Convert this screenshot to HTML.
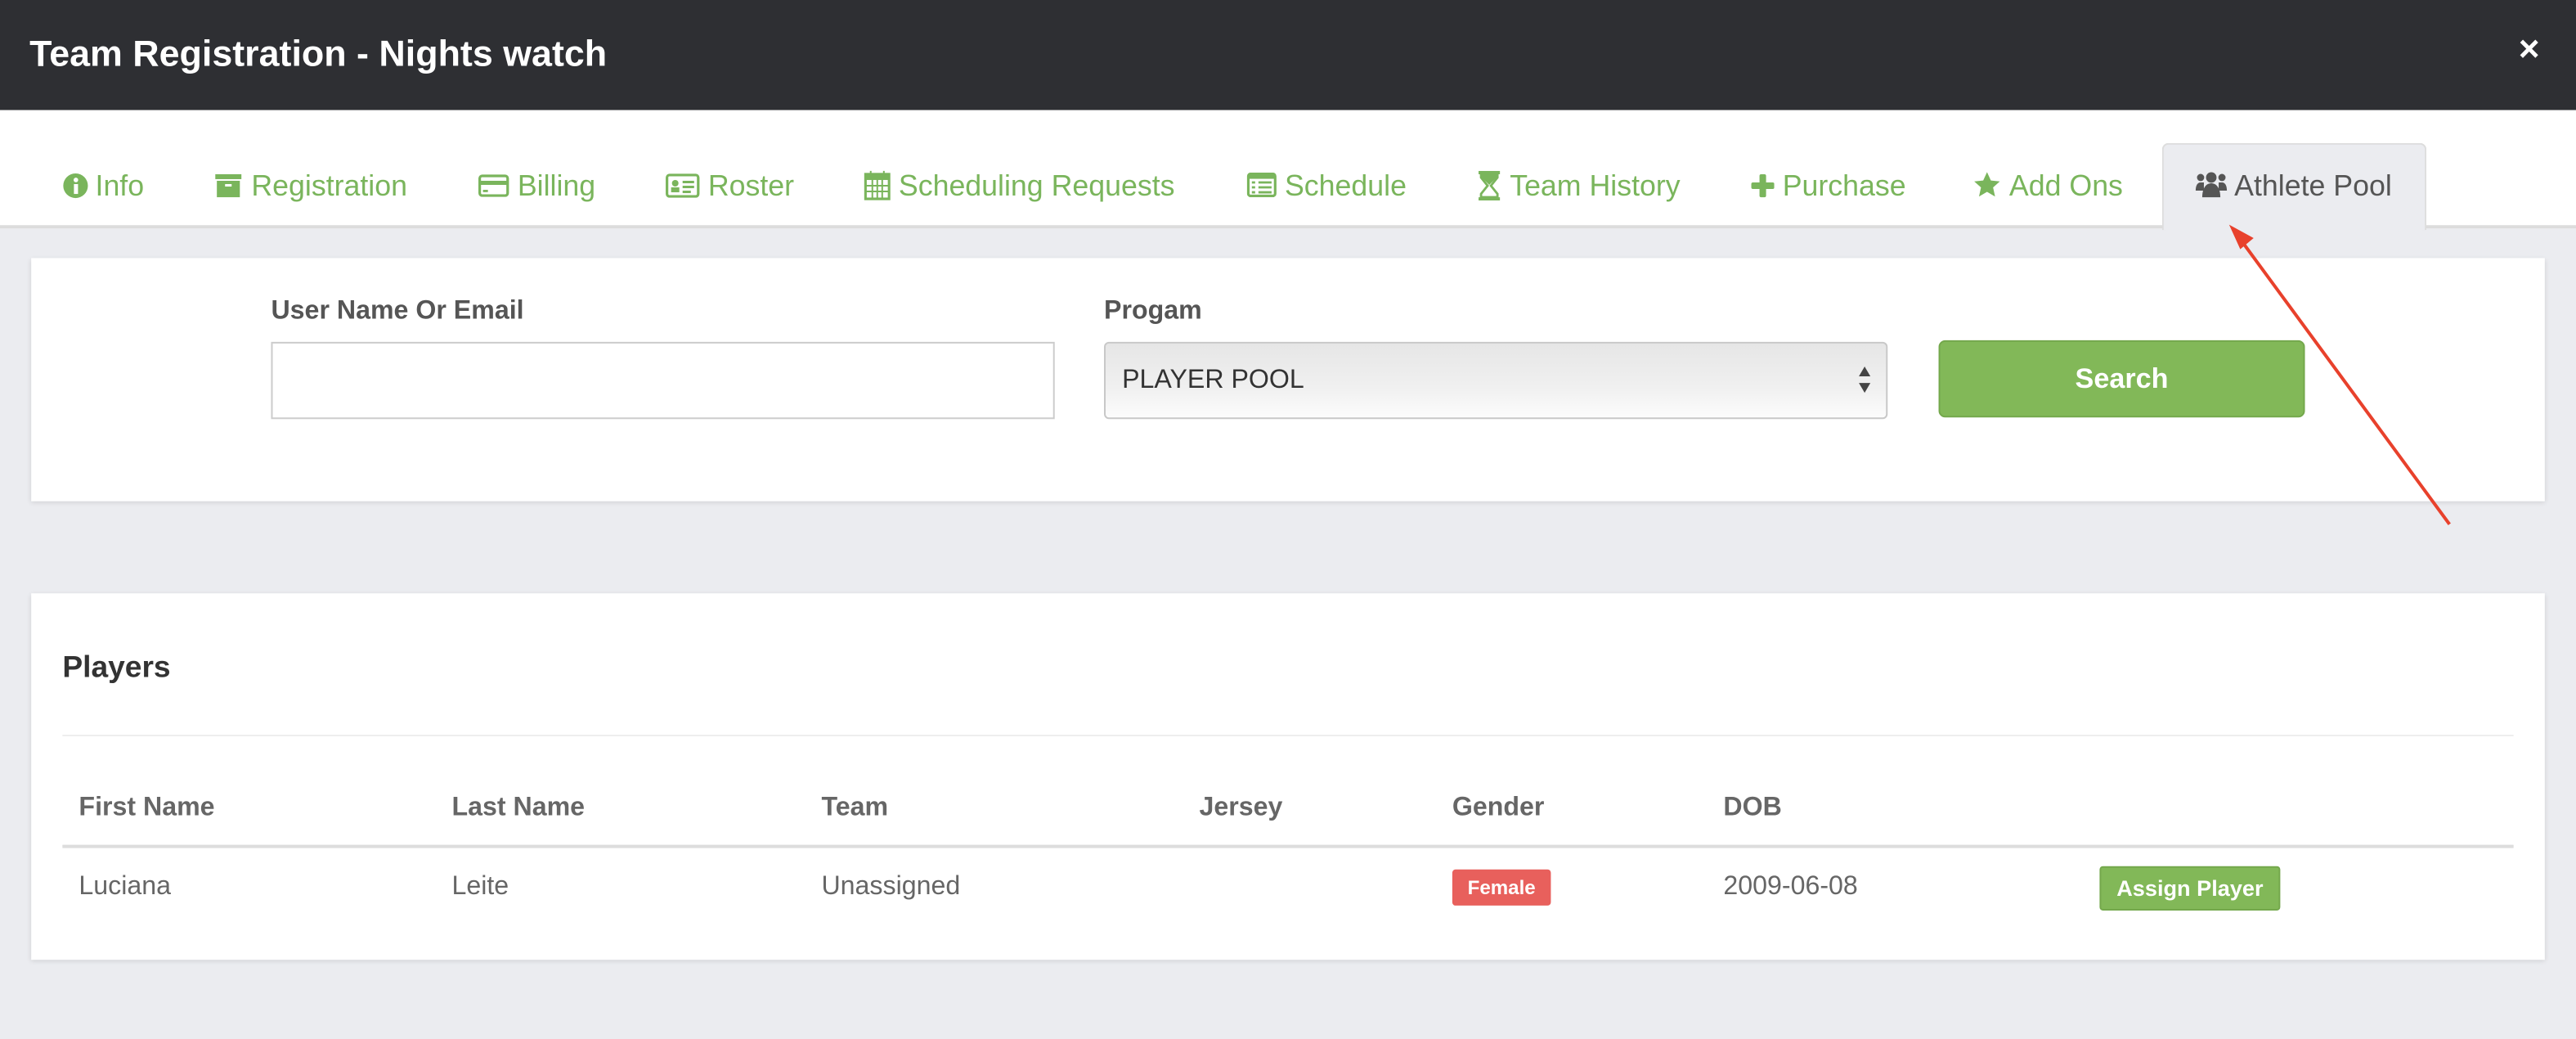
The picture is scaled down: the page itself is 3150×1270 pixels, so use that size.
<!DOCTYPE html>
<html><head><meta charset="utf-8"><style>
html,body{margin:0;padding:0;width:3150px;height:1270px;overflow:hidden;background:#ebecf0;font-family:"Liberation Sans",Arial,sans-serif}
#r{position:absolute;left:0;top:0;width:1568px;height:632px;transform:scale(2.00893);transform-origin:0 0;background:#ebecf0}
.a{position:absolute;white-space:nowrap}
.hdr{left:0;top:0;width:1568px;height:67px;background:#2e2f33}
.tabs{left:0;top:67px;width:1568px;height:70px;background:#fff;border-bottom:2px solid #dcdcdc}
.t{color:#7ab55c;font-size:17.8px;top:103px}
.ic{position:absolute;top:105px}
.card{background:#fff;box-shadow:0 1px 3px rgba(0,0,0,.12)}
.lbl{font-size:16px;font-weight:bold;color:#555}
.th{font-size:16px;font-weight:bold;color:#666;top:483px}
.td{font-size:16px;color:#666;top:531px}
</style></head><body><div id="r">
<div class="a hdr"></div>
<div class="a" style="left:18px;top:20px;color:#fff;font-size:22.3px;font-weight:bold">Team Registration - Nights watch</div>
<div class="a" style="left:1533px;top:17px;color:#fff;font-size:22px;font-weight:bold">×</div>
<div class="a tabs"></div>
<div class="a" style="left:1316px;top:87px;width:159px;height:52px;background:#ebecf0;border:1px solid #ddd;border-bottom:none;border-radius:4px 4px 0 0"></div>

<svg class="ic" style="left:38px" width="16" height="16" viewBox="0 0 16 16"><circle cx="8" cy="8" r="7.5" fill="#7ab55c"/><rect x="7" y="7" width="2.5" height="6" fill="#fff"/><circle cx="8.2" cy="4.5" r="1.4" fill="#fff"/></svg>
<div class="a t" style="left:58px">Info</div>
<svg class="ic" style="left:131px" width="16" height="16" viewBox="0 0 16 16"><rect x="0" y="1" width="16" height="3" fill="#7ab55c"/><rect x="1" y="5" width="14" height="10" fill="#7ab55c"/><rect x="6" y="7" width="4" height="1.5" fill="#fff"/></svg>
<div class="a t" style="left:153px">Registration</div>
<svg class="ic" style="left:291px" width="19" height="16" viewBox="0 0 19 16"><rect x="1" y="2" width="17" height="12" rx="1.5" fill="none" stroke="#7ab55c" stroke-width="1.6"/><rect x="1" y="5" width="17" height="2.5" fill="#7ab55c"/><rect x="3" y="10.5" width="3" height="1.4" fill="#7ab55c"/></svg>
<div class="a t" style="left:315px">Billing</div>
<svg class="ic" style="left:405px" width="21" height="16" viewBox="0 0 21 16"><rect x="1" y="1.5" width="19" height="13" rx="1.5" fill="none" stroke="#7ab55c" stroke-width="1.6"/><circle cx="6" cy="6.5" r="2" fill="#7ab55c"/><rect x="3.5" y="9" width="5" height="3" fill="#7ab55c"/><rect x="10.5" y="5" width="7" height="1.5" fill="#7ab55c"/><rect x="10.5" y="8" width="7" height="1.5" fill="#7ab55c"/><rect x="10.5" y="11" width="5" height="1.5" fill="#7ab55c"/></svg>
<div class="a t" style="left:431px">Roster</div>
<svg class="ic" style="left:526px;top:103px" width="16" height="19" viewBox="0 0 16 19"><rect x="0.8" y="3" width="14.4" height="15" fill="none" stroke="#7ab55c" stroke-width="1.6"/><rect x="0.8" y="3" width="14.4" height="3.5" fill="#7ab55c"/><path d="M4 1v4M12 1v4M1 10h14M1 13.5h14M5 6v12M8 6v12M11 6v12" stroke="#7ab55c" stroke-width="1"/></svg>
<div class="a t" style="left:547px">Scheduling Requests</div>
<svg class="ic" style="left:759px" width="18" height="15" viewBox="0 0 18 15"><rect x="0.8" y="0.8" width="16.4" height="13.4" rx="1.5" fill="none" stroke="#7ab55c" stroke-width="1.6"/><rect x="0.8" y="0.8" width="16.4" height="3" fill="#7ab55c"/><path d="M3 6h2M3 9h2M3 12h2M7 6h8M7 9h8M7 12h8" stroke="#7ab55c" stroke-width="1.4"/></svg>
<div class="a t" style="left:782px">Schedule</div>
<svg class="ic" style="left:899px;top:104px" width="15" height="18" viewBox="0 0 15 18"><path d="M1 1h13M1 17h13" stroke="#7ab55c" stroke-width="2"/><path d="M2.5 2h10v2L8.5 9l4 5v2h-10v-2l4-5-4-5z" fill="none" stroke="#7ab55c" stroke-width="1.4"/><path d="M3 2h9v2L7.5 8.5 3 4z" fill="#7ab55c"/></svg>
<div class="a t" style="left:919px">Team History</div>
<svg class="ic" style="left:1066px" width="14" height="16" viewBox="0 0 14 16"><rect x="5" y="1" width="4" height="14" rx="1" fill="#7ab55c"/><rect x="0" y="6" width="14" height="4" rx="1" fill="#7ab55c"/></svg>
<div class="a t" style="left:1085px">Purchase</div>
<svg class="ic" style="left:1201px;top:104px" width="17" height="17" viewBox="0 0 24 24"><path d="M12 1l3.3 7.2 7.7.8-5.8 5.2 1.7 7.8L12 18l-6.9 4 1.7-7.8L1 9l7.7-.8z" fill="#7ab55c"/></svg>
<div class="a t" style="left:1223px">Add Ons</div>
<svg class="ic" style="left:1336px;top:104px" width="20" height="17" viewBox="0 0 20 17"><circle cx="3.5" cy="4" r="2.2" fill="#555"/><circle cx="16.5" cy="4" r="2.2" fill="#555"/><circle cx="10" cy="4" r="3.2" fill="#555"/><path d="M0.5 12c0-3 1-5 3-5h2v5z M19.5 12c0-3-1-5-3-5h-2v5z" fill="#555"/><path d="M4.5 16c0-5 2-8.5 5.5-8.5s5.5 3.5 5.5 8.5z" fill="#555"/></svg>
<div class="a t" style="left:1360px;color:#555">Athlete Pool</div>

<div class="a card" style="left:19px;top:157px;width:1530px;height:148px"></div>
<div class="a lbl" style="left:165px;top:181px">User Name Or Email</div>
<div class="a" style="left:165px;top:208px;width:475px;height:45px;border:1px solid #ccc;background:#fff"></div>
<div class="a lbl" style="left:672px;top:181px">Progam</div>
<div class="a" style="left:672px;top:208px;width:475px;height:45px;border:1px solid #c8c8c8;border-radius:3px;background:linear-gradient(#e6e6e6,#f0f0f0 60%,#fcfcfc)"></div>
<div class="a" style="left:683px;top:223px;font-size:16px;color:#333">PLAYER POOL</div>
<svg class="a" style="left:1130px;top:222px" width="10" height="18" viewBox="0 0 10 18"><path d="M5 1l3.5 6h-7zM5 17l3.5-6h-7z" fill="#444"/></svg>
<div class="a" style="left:1180px;top:207px;width:221px;height:45px;background:#82b858;border:1px solid #74a84c;border-radius:4px;color:#fff;font-weight:bold;font-size:17px;text-align:center;line-height:45px">Search</div>

<div class="a card" style="left:19px;top:361px;width:1530px;height:223px"></div>
<div class="a" style="left:38px;top:395px;font-size:18.5px;font-weight:bold;color:#333">Players</div>
<div class="a" style="left:38px;top:447px;width:1492px;height:1px;background:#eee"></div>
<div class="a th" style="left:48px">First Name</div>
<div class="a th" style="left:275px">Last Name</div>
<div class="a th" style="left:500px">Team</div>
<div class="a th" style="left:730px">Jersey</div>
<div class="a th" style="left:884px">Gender</div>
<div class="a th" style="left:1049px">DOB</div>
<div class="a" style="left:38px;top:514px;width:1492px;height:2px;background:#ddd"></div>
<div class="a td" style="left:48px">Luciana</div>
<div class="a td" style="left:275px">Leite</div>
<div class="a td" style="left:500px">Unassigned</div>
<div class="a" style="left:884px;top:529px;width:60px;height:22px;background:#e8605c;border-radius:2px;color:#fff;font-size:12px;font-weight:bold;text-align:center;line-height:22px">Female</div>
<div class="a td" style="left:1049px">2009-06-08</div>
<div class="a" style="left:1278px;top:527px;width:110px;height:27px;background:#82b858;border:1px solid #74a84c;box-sizing:border-box;border-radius:2px;color:#fff;font-size:13.5px;font-weight:bold;text-align:center;line-height:26px">Assign Player</div>

<svg class="a" style="left:0;top:0" width="1568" height="632"><line x1="1491" y1="319" x2="1364" y2="146" stroke="#e8412c" stroke-width="2"/><path d="M1359 139l11 6-6 5z" fill="#e8412c" stroke="#e8412c" stroke-width="2"/></svg>
</div></body></html>
